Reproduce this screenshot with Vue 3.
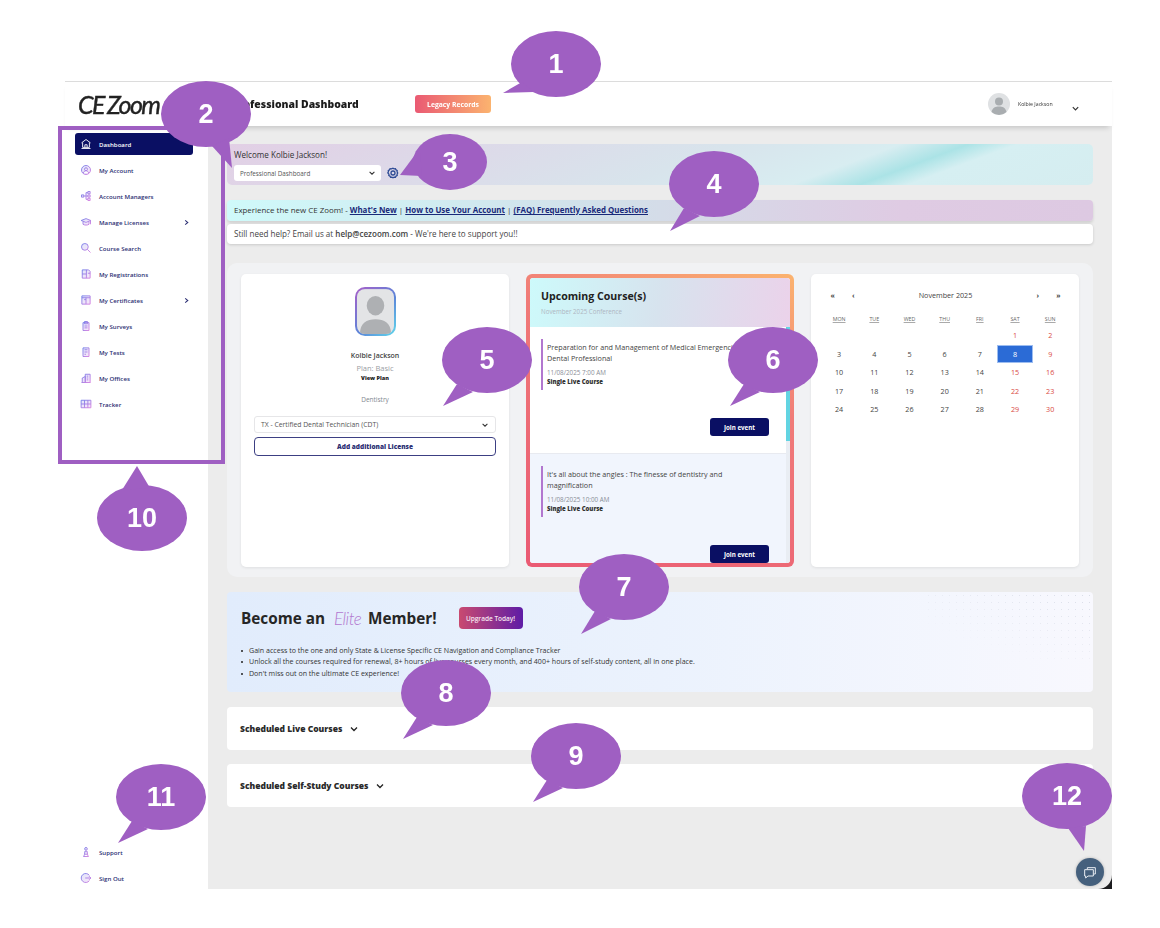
<script setup>
const icons = {
  home: 'M2 6.500 8 2l6 4.500M3.500 6v6.500h9V6M6.500 12.500V9h3v3.500M2 14h12',
  user: 'M8 2a6 6 0 1 0 0 12A6 6 0 0 0 8 2zM8 5a2 2 0 1 0 0 4 2 2 0 0 0 0-4zM4.500 12c.5-2 2-3 3.500-3s3 1 3.500 3',
  share: 'M2 6.500h3v3H2zM5 8h3M8 8V3.500h2.500M8 8h2.500M8 8v4.500h2.500M10.500 2h3v3h-3zM10.500 6.500h3v3h-3zM10.500 11h3v3h-3z',
  cap: 'M1.500 6 8 3.500 14.500 6 8 8.500zM4 7.500V11c2 1.500 6 1.500 8 0V7.500M14 6.500V11',
  search: 'M6.500 2a4.500 4.500 0 1 0 0 9 4.500 4.500 0 0 0 0-9zM10 10l4 4',
  reg: 'M3 2.500h8.500l2 2V13.500H3zM8.500 2.500v11M3 8h5.500M10.500 7h3',
  cert: 'M2.500 2.500h11v11h-11zM2.500 5h11M8 5v8.500M5.500 7.500H8',
  clip: 'M4 3.500h8v10.500H4zM6 2h4v3H6zM6 8h4M6 10.500h4',
  test: 'M4 2.500h8v11.500H4zM6 5h4M6 8h4M6 11h2',
  office: 'M2 14h12M3 14V8l4-2v8M7 14V3h6.500v11M9 5.500h2M9 8h2M9 10.500h2',
  tracker: 'M1.500 3h13v10h-13zM1.500 8h13M6 3v10M10.500 3v10',
  support: 'M8 2a1.800 1.800 0 1 0 0 3.600A1.800 1.800 0 0 0 8 2zM6.500 7h3l.5 4H6zM4.500 14h7M6 11l-1 3M10 11l1 3',
  signout: 'M12.500 4.500a6 6 0 1 0 0 7M7 8h7.500M12 5.500 14.500 8 12 10.500'
}
const nav = [
  { label: 'Dashboard', icon: 'home', active: true },
  { label: 'My Account', icon: 'user' },
  { label: 'Account Managers', icon: 'share' },
  { label: 'Manage Licenses', icon: 'cap', more: true },
  { label: 'Course Search', icon: 'search' },
  { label: 'My Registrations', icon: 'reg' },
  { label: 'My Certificates', icon: 'cert', more: true },
  { label: 'My Surveys', icon: 'clip' },
  { label: 'My Tests', icon: 'test' },
  { label: 'My Offices', icon: 'office' },
  { label: 'Tracker', icon: 'tracker' }
]
const foot = [
  { label: 'Support', icon: 'support' },
  { label: 'Sign Out', icon: 'signout' }
]
const courses = [
  { title: 'Preparation for and Management of Medical Emergencies for the Dental Professional', when: '11/08/2025 7:00 AM', alt: false },
  { title: "It's all about the angles : The finesse of dentistry and magnification", when: '11/08/2025 10:00 AM', alt: true }
]
const weekdays = ['MON', 'TUE', 'WED', 'THU', 'FRI', 'SAT', 'SUN']
const days = []
for (let i = 0; i < 5; i++) days.push({ n: '', col: i })
for (let d = 1; d <= 30; d++) days.push({ n: d, col: (d + 4) % 7 })
const bubbles = [
  { n: 1, x: 556, y: 64, tip: [503, 93], a: [522, 82], b: [534, 92] },
  { n: 2, x: 206, y: 114, tip: [232, 168], a: [212, 146], b: [229, 138] },
  { n: 3, x: 450, y: 162, rx: 37, ry: 28, tip: [400, 175], a: [420, 148], b: [422, 176] },
  { n: 4, x: 714, y: 184, tip: [670, 231], a: [684, 208], b: [700, 216] },
  { n: 5, x: 487, y: 360, tip: [443, 406], a: [457, 384], b: [473, 392] },
  { n: 6, x: 773, y: 360, tip: [730, 406], a: [744, 384], b: [760, 392] },
  { n: 7, x: 624, y: 587, tip: [581, 634], a: [595, 611], b: [611, 619] },
  { n: 8, x: 446, y: 693, tip: [403, 739], a: [417, 717], b: [433, 725] },
  { n: 9, x: 576, y: 756, tip: [533, 802], a: [547, 780], b: [563, 788] },
  { n: 10, x: 142, y: 518, tip: [137, 466], a: [122, 490], b: [150, 488] },
  { n: 11, x: 161, y: 797, tip: [118, 843], a: [132, 821], b: [148, 829] },
  { n: 12, x: 1067, y: 796, tip: [1084, 851], a: [1068, 828], b: [1086, 826] }
]
</script>

<template>
  <div class="page">
    <svg class="defs" width="0" height="0" aria-hidden="true">
      <defs>
        <linearGradient id="ig" x1="0" y1="0" x2="1" y2="1">
          <stop offset="0" stop-color="#6d7be8" />
          <stop offset="1" stop-color="#d67fe0" />
        </linearGradient>
      </defs>
    </svg>

    <div class="frame">
      <header class="top">
        <div class="logo">CE<span class="logo-z">Zoom</span></div>
        <div class="title">Professional Dashboard</div>
        <button class="legacy">Legacy Records</button>
        <div class="account">
          <svg class="avatar-small" viewBox="0 0 22 22"><circle cx="11" cy="11" r="11" fill="#dfe1e3" /><circle cx="11" cy="8.500" r="4" fill="#a9adb0" /><path d="M3.500 19c1-4.500 4-5.500 7.500-5.500s6.500 1 7.500 5.500a11 11 0 0 1-15 0z" fill="#a9adb0" /></svg>
          <span class="acc-name">Kolbie Jackson</span>
          <svg class="acc-chev" viewBox="0 0 10 10"><path d="M2 3.500 5 6.500 8 3.500" fill="none" stroke="#333" stroke-width="1.300" /></svg>
        </div>
      </header>

      <div class="body">
        <aside class="side">
          <nav class="nav">
            <a v-for="item in nav" :key="item.label" class="nav-item" :class="{ active: item.active }">
              <svg class="nav-icon" viewBox="0 0 16 16"><path :d="icons[item.icon]" :fill="item.active ? 'none' : 'url(#ig)'" fill-opacity=".2" :stroke="item.active ? '#fff' : 'url(#ig)'" stroke-width="1.200" /></svg>
              <span>{{ item.label }}</span>
              <svg v-if="item.more" class="nav-more" viewBox="0 0 8 8"><path d="M2.500 1.500 5.500 4 2.500 6.500" fill="none" stroke="#2c2f73" stroke-width="1.200" /></svg>
            </a>
          </nav>
          <nav class="nav foot">
            <a v-for="item in foot" :key="item.label" class="nav-item">
              <svg class="nav-icon" viewBox="0 0 16 16"><path :d="icons[item.icon]" fill="url(#ig)" fill-opacity=".2" stroke="url(#ig)" stroke-width="1.200" /></svg>
              <span>{{ item.label }}</span>
            </a>
          </nav>
        </aside>

        <main class="main">
          <section class="welcome">
            <div class="welcome-text">Welcome Kolbie Jackson!</div>
            <div class="welcome-row">
              <div class="select dash-select">
                <span>Professional Dashboard</span>
                <svg class="chev" viewBox="0 0 10 10"><path d="M2 3.500 5 6.500 8 3.500" fill="none" stroke="#333" stroke-width="1.300" /></svg>
              </div>
              <svg class="gear" viewBox="0 0 24 24"><path d="M12 2.500l2.200 1.300 2.600-.3 1.300 2.300 2.300 1.300-.3 2.600 1.300 2.300-1.300 2.300.3 2.600-2.300 1.300-1.300 2.300-2.600-.3-2.200 1.300-2.200-1.300-2.600.3-1.300-2.300-2.300-1.300.3-2.600L1.600 12l1.300-2.300-.3-2.600 2.300-1.300 1.300-2.300 2.600.3z" fill="none" stroke="#2e4b95" stroke-width="2.600" /><circle cx="12" cy="12" r="4" fill="none" stroke="#2e4b95" stroke-width="2.600" /></svg>
            </div>
          </section>

          <div class="info">Experience the new CE Zoom! - <a>What's New</a> | <a>How to Use Your Account</a> | <a>(FAQ) Frequently Asked Questions</a></div>
          <div class="help">Still need help? Email us at <b>help@cezoom.com</b> - We're here to support you!!</div>

          <section class="panel">
            <div class="card profile">
              <div class="photo">
                <svg viewBox="0 0 38 46"><rect width="38" height="46" fill="#e3e4e6" /><ellipse cx="19" cy="17" rx="9" ry="10" fill="#aeb0b3" /><path d="M3 46c0-11 7-15 16-15s16 4 16 15z" fill="#aeb0b3" /></svg>
              </div>
              <div class="p-name">Kolbie Jackson</div>
              <div class="p-plan">Plan: Basic</div>
              <div class="p-view">View Plan</div>
              <div class="p-field">Dentistry</div>
              <div class="select lic-select">
                <span>TX - Certified Dental Technician (CDT)</span>
                <svg class="chev" viewBox="0 0 10 10"><path d="M2 3.500 5 6.500 8 3.500" fill="none" stroke="#333" stroke-width="1.300" /></svg>
              </div>
              <button class="add">Add additional License</button>
            </div>

            <div class="upcoming">
              <div class="up-inner">
                <div class="up-head">
                  <h2>Upcoming Course(s)</h2>
                  <p>November 2025 Conference</p>
                </div>
                <div class="up-list">
                  <div class="up-scroll">
                    <article v-for="c in courses" :key="c.when" class="course" :class="{ alt: c.alt }">
                      <div class="course-info">
                        <div class="c-title">{{ c.title }}</div>
                        <div class="c-when">{{ c.when }}</div>
                        <div class="c-type">Single Live Course</div>
                      </div>
                      <button class="join">Join event</button>
                    </article>
                  </div>
                  <div class="track"><div class="thumb"></div></div>
                </div>
              </div>
            </div>

            <div class="card cal">
              <div class="cal-nav">
                <span class="arrows"><i>«</i><i>‹</i></span>
                <span class="month">November 2025</span>
                <span class="arrows"><i>›</i><i>»</i></span>
              </div>
              <div class="cal-grid">
                <div v-for="w in weekdays" :key="w" class="wd">{{ w }}</div>
                <div
                  v-for="(d, i) in days"
                  :key="i"
                  class="day"
                  :class="{ weekend: d.col >= 5, today: d.n === 8 }"
                >{{ d.n }}</div>
              </div>
            </div>
          </section>

          <section class="elite">
            <div class="dots"></div>
            <div class="elite-head">
              <h2>Become an</h2>
              <span class="script">Elite</span>
              <h2>Member!</h2>
              <button class="upgrade">Upgrade Today!</button>
            </div>
            <ul>
              <li>Gain access to the one and only State &amp; License Specific CE Navigation and Compliance Tracker</li>
              <li>Unlock all the courses required for renewal, 8+ hours of live courses every month, and 400+ hours of self-study content, all in one place.</li>
              <li>Don't miss out on the ultimate CE experience!</li>
            </ul>
          </section>

          <div class="acc first">
            <span>Scheduled Live Courses</span>
            <svg class="chev" viewBox="0 0 10 10"><path d="M2 3.500 5 6.500 8 3.500" fill="none" stroke="#222" stroke-width="1.300" /></svg>
          </div>
          <div class="acc">
            <span>Scheduled Self-Study Courses</span>
            <svg class="chev" viewBox="0 0 10 10"><path d="M2 3.500 5 6.500 8 3.500" fill="none" stroke="#222" stroke-width="1.300" /></svg>
          </div>

          <button class="chat" aria-label="Chat">
            <svg viewBox="0 0 24 24"><path d="M8 8V5.500h12V15h-2.500M4 8.500h13V18H9l-3.500 3V18H4z" fill="none" stroke="#e8edf2" stroke-width="1.500" stroke-linejoin="round" /></svg>
          </button>
        </main>
      </div>
    </div>

    <div class="hilite"></div>
    <svg class="callouts" viewBox="0 0 1160 928">
      <g v-for="b in bubbles" :key="b.n">
        <ellipse :cx="b.x" :cy="b.y" :rx="b.rx || 45" :ry="b.ry || 33" fill="#9f5fc2" />
        <polygon :points="`${b.a[0]},${b.a[1]} ${b.tip[0]},${b.tip[1]} ${b.b[0]},${b.b[1]}`" fill="#9f5fc2" />
        <text :x="b.x" :y="b.y + 9" text-anchor="middle">{{ b.n }}</text>
      </g>
    </svg>
  </div>
</template>

<style>
html, body { margin: 0; background: #fff; }
</style>

<style scoped>
.page {
  position: relative;
  width: 1160px;
  height: 928px;
  box-sizing: border-box;
  padding: 81px 48px 39px 65px;
  overflow: hidden;
  background: #fff;
  font-family: "Open Sans", "Noto Sans", sans-serif;
  color: #333;
}
.defs { position: absolute; }
.frame {
  height: 100%;
  display: flex;
  flex-direction: column;
  background: #1d1d1f;
  filter: blur(0.35px);
}
button { font-family: inherit; border: 0; padding: 0; }

/* header */
.top {
  position: relative;
  z-index: 2;
  height: 45px;
  box-sizing: border-box;
  flex: none;
  display: flex;
  align-items: center;
  background: #fff;
  border-top: 1px solid #dcdcdc;
  box-shadow: 0 5px 5px -3px rgba(0, 0, 0, .16);
}
.logo {
  width: 154px;
  margin-left: 13px;
  font-family: Lato, sans-serif;
  font-size: 25px;
  line-height: 1;
  font-style: italic;
  letter-spacing: -1.600px;
  color: #222;
  -webkit-text-stroke: .4px #222;
}
.logo-z { margin-left: 3px; }
.title { width: 183px; font-size: 10.400px; font-weight: 800; color: #1c1c1c; white-space: nowrap; }
.legacy {
  width: 76px;
  height: 18px;
  border-radius: 3px;
  background: linear-gradient(90deg, #ea5a73, #fbb36f);
  color: #fff;
  font-size: 6.800px;
  font-weight: 700;
}
.account { margin-left: auto; display: flex; align-items: center; padding-right: 32px; }
.avatar-small { width: 22px; height: 22px; }
.acc-name { margin-left: 8px; width: 50px; font-size: 5.200px; color: #333; white-space: nowrap; }
.acc-chev { width: 9px; height: 9px; margin: 8px 0 0 3px; }

/* layout */
.body { flex: 1; min-height: 0; display: flex; }
.side {
  width: 143px;
  flex: none;
  display: flex;
  flex-direction: column;
  justify-content: space-between;
  box-sizing: border-box;
  padding: 7px 15px 0 10px;
  background: #fff;
}
.nav { display: flex; flex-direction: column; gap: 4px; }
.nav-item {
  display: flex;
  align-items: center;
  height: 22px;
  border-radius: 3px;
  font-size: 6.100px;
  font-weight: 600;
  color: #2c2f73;
}
.nav-item.active { background: #0a0f63; color: #fff; }
.nav-icon { width: 12px; height: 12px; margin: 0 7px 0 5px; flex: none; }
.nav-more { width: 7px; height: 7px; margin-left: auto; margin-right: 3px; }
.main {
  position: relative;
  flex: 1;
  min-width: 0;
  box-sizing: border-box;
  padding: 18px 19px 0;
  background: #ececec;
  border-bottom-right-radius: 14px;
}

/* banners */
.welcome {
  height: 41px;
  box-sizing: border-box;
  padding: 5px 7px 0;
  margin-bottom: 15px;
  border-radius: 5px;
  background: linear-gradient(159.600deg, #e2cfe5 0%, #d8e4ec 52%, #d8edf1 69%, #abe3e6 76%, #d6eff2 81%, #d5edf0 100%);
}
.welcome-text { font-size: 8.100px; line-height: 11px; font-weight: 500; color: #333; }
.welcome-row { display: flex; align-items: center; gap: 6px; margin-top: 5px; }
.select {
  display: flex;
  align-items: center;
  justify-content: space-between;
  box-sizing: border-box;
  background: #fff;
  border-radius: 3px;
  font-size: 6.300px;
  color: #555;
}
.dash-select { width: 147px; height: 16px; padding: 0 5px 0 6px; }
.chev { width: 8px; height: 8px; flex: none; }
.gear { width: 12px; height: 12px; }
.info {
  height: 21px;
  line-height: 21px;
  padding-left: 7px;
  margin-bottom: 3px;
  border-radius: 4px;
  background: linear-gradient(90deg, #cffafa 0%, #d2dfe9 45%, #dfcbe3 78%, #ddc9e2 100%);
  box-shadow: 0 2px 3px rgba(0, 0, 0, .12);
  font-size: 7.920px;
  color: #333;
  white-space: nowrap;
}
.info a { color: #1a2a7a; font-weight: 700; text-decoration: underline; }
.help {
  height: 20px;
  line-height: 20px;
  padding-left: 7px;
  margin-bottom: 19px;
  border-radius: 4px;
  background: #fff;
  box-shadow: 0 1px 3px rgba(0, 0, 0, .15);
  font-size: 8.050px;
  color: #444;
  white-space: nowrap;
}
.help b { font-weight: 600; }

/* three card panel */
.panel {
  height: 314px;
  box-sizing: border-box;
  padding: 11px 14px 10px;
  margin-bottom: 15px;
  display: grid;
  grid-template-columns: 268px 268px 268px;
  column-gap: 17px;
  border-radius: 10px;
  background: #f1f2f4;
}
.card { background: #fff; border-radius: 5px; box-shadow: 0 1px 3px rgba(0, 0, 0, .08); }
.profile {
  display: flex;
  flex-direction: column;
  align-items: center;
  box-sizing: border-box;
  padding: 13px 13px 0;
}
.photo {
  width: 41px;
  height: 49px;
  box-sizing: border-box;
  padding: 2px;
  border-radius: 10px;
  background: linear-gradient(135deg, #a85ec8, #5d84d8 55%, #5fd8ec);
}
.photo svg { display: block; width: 100%; height: 100%; border-radius: 8px; }
.p-name { margin-top: 15px; font-size: 7px; line-height: 10px; font-weight: 600; color: #444; }
.p-plan { margin-top: 2px; font-size: 7.500px; line-height: 11px; color: #9a9ea4; }
.p-view { margin-top: 0; font-size: 5.500px; line-height: 9px; font-weight: 800; color: #222; }
.p-field { margin-top: 12px; font-size: 6.500px; line-height: 10px; color: #83888f; }
.lic-select {
  align-self: stretch;
  height: 17px;
  margin-top: 11px;
  padding: 0 6px;
  border: 1px solid #e6e6e8;
  font-size: 6.800px;
}
.add {
  align-self: stretch;
  height: 19px;
  margin-top: 4px;
  box-sizing: border-box;
  border: 1.500px solid #3c3f83;
  border-radius: 4px;
  background: #fff;
  color: #2c2f73;
  font-size: 6.500px;
  font-weight: 800;
}

/* upcoming */
.upcoming {
  padding: 4px;
  border-radius: 6px;
  box-sizing: border-box;
  min-height: 0;
  height: 293px;
  background: linear-gradient(25deg, #ea5a73 0%, #f07b78 65%, #fbb36f 100%);
}
.up-inner { height: 100%; display: flex; flex-direction: column; border-radius: 3px; overflow: hidden; background: #fff; }
.up-head {
  height: 49px;
  flex: none;
  box-sizing: border-box;
  padding: 11px 11px 0;
  background: linear-gradient(100deg, #cdfafb 0%, #d7e3ee 50%, #ebd2ea 100%);
}
.up-head h2 { margin: 0; font-size: 10.600px; line-height: 14px; font-weight: 700; color: #222; }
.up-head p { margin: 4px 0 0; font-size: 6.200px; line-height: 9px; color: #aeb6c2; }
.up-list { position: relative; flex: 1; min-height: 0; display: flex; }
.up-scroll { flex: 1; min-width: 0; display: flex; flex-direction: column; overflow: hidden; }
.course {
  flex: none;
  height: 127px;
  box-sizing: border-box;
  position: relative;
  padding: 12px 0 0 11px;
  background: #fff;
  border-bottom: 1px solid #e8eaf0;
}
.course.alt { background: #f1f5fd; border-bottom: 0; }
.course-info { height: 51px; box-sizing: border-box; padding: 3px 0 0 4px; border-left: 2px solid #b277cf; }
.c-title { width: 222px; font-size: 7.200px; line-height: 11px; color: #444; }
.c-when { margin-top: 3.500px; font-size: 6.300px; line-height: 10px; color: #888d96; }
.c-type { font-size: 6px; line-height: 8.500px; font-weight: 800; color: #333; }
.join {
  position: absolute;
  right: 17px;
  top: 91px;
  width: 59px;
  height: 18px;
  border-radius: 3px;
  background: #0a0f63;
  color: #fff;
  font-size: 6.200px;
  font-weight: 700;
}
.track { width: 4px; flex: none; margin-right: 0; background: #e9edf3; }
.thumb { height: 114px; background: #62d4e2; }

/* calendar */
.cal { padding: 14px 10.500px 0; box-sizing: border-box; }
.cal-nav { display: flex; align-items: center; justify-content: space-between; height: 14px; padding: 0 8px 0 9px; }
.arrows { display: flex; font-size: 7px; color: #444; width: 24px; justify-content: space-between; }
.arrows i { font-style: normal; font-weight: 700; }
.month { font-size: 7.200px; color: #444; }
.cal-grid { display: grid; grid-template-columns: repeat(7, 35.200px); grid-template-rows: 13px; grid-auto-rows: 18.500px; margin-top: 11px; }
.wd { font-size: 5.300px; line-height: 12px; text-align: center; color: #666; text-decoration: underline; text-decoration-color: #aaa; }
.day { display: flex; align-items: center; justify-content: center; font-size: 7.200px; color: #444; }
.day.weekend { color: #d94a44; }
.day.today { background: #2b6bd6; color: #fff; box-shadow: inset 0 0 0 1px #9dbdf0; }

/* elite */
.elite {
  position: relative;
  height: 100px;
  box-sizing: border-box;
  padding: 15px 14px 0;
  margin-bottom: 15px;
  overflow: hidden;
  border-radius: 4px;
  background: linear-gradient(90deg, #e1ecfc 0%, #ebf2fd 50%, #f8f8fe 100%);
}
.dots {
  position: absolute;
  right: 0;
  top: 0;
  width: 168px;
  height: 68px;
  background-image: radial-gradient(circle, #d7dbe6 0.7px, transparent 1px);
  background-size: 7px 7px;
  -webkit-mask-image: linear-gradient(200deg, #000, transparent 75%);
  mask-image: linear-gradient(200deg, #000, transparent 75%);
}
.elite-head { display: flex; align-items: center; height: 22px; }
.elite-head h2 { margin: 0; font-size: 15.300px; font-weight: 700; color: #262626; white-space: nowrap; }
.script {
  width: 26px;
  margin: 0 8px 0 9px;
  font-family: Lato, sans-serif;
  font-size: 17px;
  font-weight: 300;
  font-style: italic;
  letter-spacing: -.5px;
  color: #b277cf;
}
.upgrade {
  margin-left: 22px;
  width: 64px;
  height: 22px;
  border-radius: 4px;
  background: linear-gradient(90deg, #c94a70, #5e1ca6);
  color: #f7e6f0;
  font-size: 6.500px;
  font-weight: 600;
  white-space: nowrap;
}
.elite ul { margin: 16px 0 0; padding-left: 8px; list-style: none; }
.elite li { position: relative; font-size: 7.070px; line-height: 11.300px; color: #333; white-space: nowrap; }
.elite li::before {
  content: "";
  position: absolute;
  left: -8px;
  top: 5px;
  width: 2px;
  height: 2px;
  border-radius: 50%;
  background: #222;
}

/* accordions */
.acc {
  display: flex;
  align-items: center;
  gap: 7px;
  height: 43px;
  box-sizing: border-box;
  padding-left: 13px;
  border-radius: 4px;
  background: #fff;
  font-size: 8.500px;
  font-weight: 800;
  color: #2a2a2a;
}
.acc .chev { width: 10px; height: 10px; }
.acc.first { margin-bottom: 14px; }
.chat {
  position: absolute;
  right: 8px;
  bottom: 3px;
  width: 28px;
  height: 28px;
  display: flex;
  align-items: center;
  justify-content: center;
  border-radius: 50%;
  background: #45607d;
  box-shadow: 0 0 3px rgba(0, 0, 0, .25);
}
.chat svg { width: 16px; height: 16px; }

/* annotations */
.hilite {
  position: absolute;
  left: 58px;
  top: 126px;
  width: 167px;
  height: 338px;
  box-sizing: border-box;
  border: 4px solid #9f5fc2;
  pointer-events: none;
}
.callouts { position: absolute; left: 0; top: 0; width: 1160px; height: 928px; pointer-events: none; }
.callouts text { font-family: "Liberation Sans", Arial, sans-serif; font-size: 27px; font-weight: 700; fill: #fff; }
</style>
